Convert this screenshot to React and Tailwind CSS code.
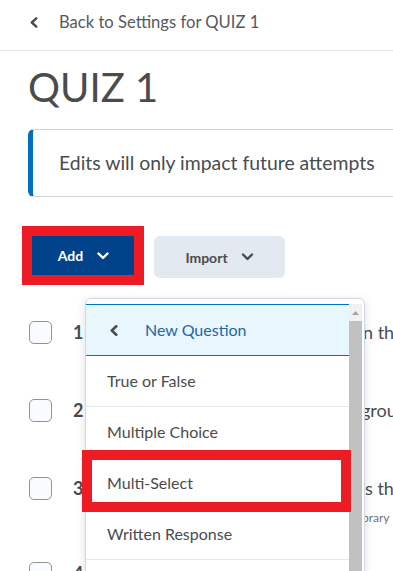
const Chevron = ({ className, color = "#494c4e", w = 2.4 }) => (
  <svg className={className} viewBox="0 0 8 11" fill="none">
    <polyline points="6.3,1.3 1.8,5.5 6.3,9.7" stroke={color} strokeWidth={w} strokeLinecap="round" strokeLinejoin="round" />
  </svg>
);

const Down = ({ className, color }) => (
  <svg className={className} viewBox="0 0 12 8" fill="none">
    <polyline points="1.5,1.5 6,6 10.5,1.5" stroke={color} strokeWidth="2.4" strokeLinecap="round" strokeLinejoin="round" />
  </svg>
);

function Row({ n, hidden, shown, sub, h, w = "w-[266px]" }) {
  return (
    <div className={`flex items-start ${h}`}>
      <div className="w-[23px] h-[23px] shrink-0 rounded-[5px] border border-[#8f9498] bg-[#f9fbff]" />
      <div className="ml-[21px] w-[12px] shrink-0 text-[18px] leading-[23px] font-bold">{n}</div>
      <div className="ml-[12px] whitespace-nowrap">
        <div className="text-[18px] leading-[23px]">
          <span className={`inline-block ${w} overflow-hidden align-top`}>{hidden}</span>
          {shown}
        </div>
        {sub && (
          <div className="mt-[9px] text-[12px] leading-[17px] text-[#6e7376]">
            <span className="inline-block w-[265px] overflow-hidden align-top">{sub[0]}</span>
            {sub[1]}
          </div>
        )}
      </div>
    </div>
  );
}

export default function App() {
  const items = ["True or False", "Multiple Choice", "Multi-Select", "Written Response", "Short Answer"];
  return (
    <div className="relative w-[393px] h-[571px] overflow-hidden bg-white font-['Lato','Noto_Sans',sans-serif] text-[#494c4e]">
      <div className="h-[51px] border-b border-[#e3e9f1] flex items-center pb-[6px]">
        <Chevron className="ml-[30px] w-[8px] h-[11px]" />
        <span className="ml-[21px] text-[16.6px] leading-[20px] text-[#565a5c]">Back to Settings for QUIZ 1</span>
      </div>

      <h1 className="mt-[12px] pl-[28px] text-[40px] leading-[48px] font-normal">QUIZ 1</h1>

      <div className="mt-[18px] ml-[28px] w-[420px] h-[68px] border border-[#cdd5dc] border-l-[5px] border-l-[#006fbf] rounded-l-[6px] flex items-center pl-[26px] text-[19.4px]">
        Edits will only impact future attempts
      </div>

      <div className="mt-[29px] ml-[22px] flex items-start gap-[10px]">
        <div className="border-[10px] border-[#ed1c24]">
          <button className="w-[102px] h-[39px] bg-[#00438a] text-white text-[14px] font-bold flex items-center justify-center gap-[14px] pl-[1px]">
            <span>Add</span>
            <Down className="w-[12px] h-[8px]" color="#ffffff" />
          </button>
        </div>
        <button className="mt-[10px] w-[131px] h-[42px] rounded-[6px] bg-[#e3e9f1] text-[14px] font-bold text-[#494c4e] flex items-center justify-center gap-[13px]">
          <span>Import</span>
          <Down className="w-[13px] h-[8px]" color="#494c4e" />
        </button>
      </div>

      <div className="mt-[36px] pl-[29px]">
        <Row n="1" hidden="Which statement below is true whe" shown="n the" h="h-[78px]" />
        <Row n="2" hidden="Select all items belonging to the " shown="group" h="h-[78px]" w="w-[264px]" />
        <Row n="3" hidden="Explain why this process i" shown="s the" sub={["Imported from Question Li", "brary"]} h="h-[85px]" w="w-[268px]" />
        <Row n="4" hidden="Describe the main steps of the" shown=" process" h="h-[78px]" />
      </div>

      <div className="absolute left-[85px] top-[298px] w-[280px] h-[300px] bg-white border border-[#d3d9e3] rounded-t-[6px] shadow-[0_2px_10px_rgba(0,0,0,0.13)] pt-[5px] flex">
        <div className="w-[263px]">
          <div className="h-[52px] bg-[#e8f7fe] border-y border-[#006fbf] flex items-center">
            <Chevron className="ml-[24px] w-[8px] h-[11px]" w={2.6} />
            <span className="ml-[27px] text-[16px] text-[#1f66a6]">New Question</span>
          </div>
          {items.map((t) => (
            <div key={t} className="h-[51px] border-b border-[#e3e9f1] flex items-center pl-[21px] text-[16px]">
              {t}
            </div>
          ))}
        </div>
        <div className="w-[13px] flex flex-col">
          <div className="h-[17px] bg-[#f1f1f1] flex items-center justify-center">
            <svg className="w-[7px] h-[4px]" viewBox="0 0 7 4"><polygon points="3.5,0 7,4 0,4" fill="#a3a3a3" /></svg>
          </div>
          <div className="flex-1 bg-[#c1c1c1]" />
        </div>
      </div>

      <div className="absolute left-[82px] top-[450px] w-[269px] h-[62px] border-[10px] border-[#ed1c24]" />
    </div>
  );
}
